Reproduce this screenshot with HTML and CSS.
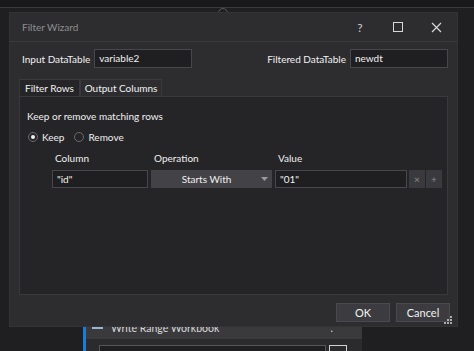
FILE: index.html
```html
<!DOCTYPE html>
<html lang="en">
<head>
  <meta charset="UTF-8">
  <title>Filter Wizard</title>
  <link rel="stylesheet" href="styles.css">
</head>
<body>

  <div class="topbar"></div>
  <div class="collapse-dot"></div>

  <!-- activity behind the dialog -->
  <div class="activity">
    <div class="activity-head">
      <span class="activity-icon"></span>
      <span class="activity-title">Write Range Workbook</span>
      <span class="activity-dot">.</span>
      <span class="activity-chev">&#8963;</span>
    </div>
    <div class="activity-body">
      <div class="activity-input"></div>
      <div class="activity-btn"></div>
    </div>
  </div>

  <div class="dialog">
    <div class="title-bar">
      <span class="title">Filter Wizard</span>
      <div class="title-icons">
        <span class="t-icon">?</span>
        <span class="t-icon"><span class="max-box"></span></span>
        <span class="t-icon">
          <svg width="11" height="11" viewBox="0 0 11 11"><path d="M1 1 L10 10 M10 1 L1 10" stroke="#d8d8d8" stroke-width="1.2"/></svg>
        </span>
      </div>
    </div>

    <div class="dialog-body">
      <div class="table-row">
        <div class="field">
          <label>Input DataTable</label>
          <div class="text-box">variable2</div>
        </div>
        <div class="field">
          <label>Filtered DataTable</label>
          <div class="text-box">newdt</div>
        </div>
      </div>

      <div class="tabs">
        <span class="tab active">Filter Rows</span>
        <span class="tab">Output Columns</span>
      </div>

      <div class="tab-panel">
        <div class="hint">Keep or remove matching rows</div>
        <div class="radios">
          <span class="radio checked"></span><span class="radio-label">Keep</span>
          <span class="radio"></span><span class="radio-label">Remove</span>
        </div>

        <div class="filter-grid">
          <span class="col-head">Column</span>
          <span class="col-head">Operation</span>
          <span class="col-head">Value</span>
          <span></span>

          <div class="text-box cell">"id"</div>
          <div class="select">
            <span>Starts With</span>
            <svg class="caret" width="7" height="4" viewBox="0 0 7 4"><path d="M0 0 H7 L3.5 4 Z" fill="#9a9a9e"/></svg>
          </div>
          <div class="text-box cell">"01"</div>
          <div class="row-btns">
            <span class="row-btn">&#215;</span>
            <span class="row-btn">+</span>
          </div>
        </div>
      </div>

      <div class="footer">
        <button class="btn">OK</button>
        <button class="btn">Cancel</button>
        <svg class="grip" width="8" height="8" viewBox="0 0 8 8">
          <rect x="6" y="0" width="2" height="2" fill="#aaa"/>
          <rect x="3" y="3" width="2" height="2" fill="#aaa"/>
          <rect x="6" y="3" width="2" height="2" fill="#aaa"/>
          <rect x="0" y="6" width="2" height="2" fill="#aaa"/>
          <rect x="3" y="6" width="2" height="2" fill="#aaa"/>
          <rect x="6" y="6" width="2" height="2" fill="#aaa"/>
        </svg>
      </div>
    </div>
  </div>

</body>
</html>
```

FILE: styles.css
```css
body {
  margin: 0;
  width: 474px;
  height: 351px;
  overflow: hidden;
  position: relative;
  background-color: #1f1f21;
  font-family: Lato, "Noto Sans", sans-serif;
  font-size: 10px;
  color: #f0f0f0;
}

.topbar {
  height: 7px;
  background-color: #19191b;
  border-bottom: 1px solid #3a3a3d;
}

.collapse-dot {
  position: absolute;
  left: 218px;
  top: 8px;
  width: 8px;
  height: 8px;
  border: 1px solid #5a5a5e;
  border-radius: 50%;
}

/* dialog */
.dialog {
  position: relative;
  z-index: 2;
  margin: 5px 0 0 10px;
  width: 447px;
  height: 313px;
  background-color: #2d2d30;
  box-shadow: 0 0 0 1px #333337;
  display: flex;
  flex-direction: column;
}

.title-bar {
  height: 28px;
  border-bottom: 1px solid #3a3a3d;
  display: flex;
  align-items: center;
  justify-content: space-between;
  padding-left: 12px;
}

.title {
  color: #8e8e92;
  font-size: 10px;
}

.title-icons {
  display: flex;
  align-items: center;
  padding-right: 2px;
}

.t-icon {
  width: 38px;
  display: flex;
  justify-content: center;
  color: #d0d0d0;
  font-size: 12px;
}

.max-box {
  width: 8px;
  height: 8px;
  border: 1px solid #d8d8d8;
}

.dialog-body {
  flex: 1;
  display: flex;
  flex-direction: column;
  padding: 7px 7px 4px 9px;
}

.table-row {
  display: flex;
  justify-content: space-between;
  padding-left: 3px;
  padding-right: 2px;
}

.field {
  display: flex;
  align-items: center;
  gap: 4px;
}

.field label {
  color: #f2f2f2;
}

.text-box {
  box-sizing: border-box;
  width: 98px;
  height: 19px;
  padding: 0 4px;
  line-height: 17px;
  background-color: #1f1f21;
  border: 1px solid #48484c;
  color: #f2f2f2;
}

/* tabs */
.tabs {
  margin-top: 11px;
  display: flex;
  height: 17px;
}

.tab {
  box-sizing: border-box;
  width: 82px;
  height: 17px;
  line-height: 16px;
  text-align: center;
  white-space: nowrap;
  border: 1px solid #3a3a3e;
  border-bottom: none;
  background-color: #2d2d30;
  color: #f2f2f2;
}

.tab.active {
  width: 61px;
  background-color: #252527;
}

.tab-panel {
  box-sizing: border-box;
  width: 429px;
  height: 199px;
  background-color: #252527;
  border: 1px solid #3a3a3e;
  padding: 12px 0 0 7px;
}

.hint {
  line-height: 14px;
}

.radios {
  margin-top: 7px;
  display: flex;
  align-items: center;
  height: 14px;
}

.radio {
  box-sizing: border-box;
  width: 10px;
  height: 10px;
  border: 1px solid #6a6a6e;
  border-radius: 50%;
  margin-left: 1px;
  margin-right: 4px;
  display: flex;
  align-items: center;
  justify-content: center;
}

.radio.checked::after {
  content: "";
  width: 4px;
  height: 4px;
  border-radius: 50%;
  background-color: #f0f0f0;
}

.radio-label {
  margin-right: 9px;
}

.filter-grid {
  margin-top: 7px;
  margin-left: 25px;
  display: grid;
  grid-template-columns: 96px 121px 132px 35px;
  column-gap: 3px;
  row-gap: 4px;
}

.col-head {
  padding-left: 3px;
  line-height: 15px;
}

.text-box.cell {
  width: auto;
  height: 18px;
  line-height: 16px;
}

.select {
  box-sizing: border-box;
  height: 18px;
  padding-right: 10px;
  background-color: #434347;
  display: flex;
  align-items: center;
  justify-content: center;
  position: relative;
}

.caret {
  position: absolute;
  right: 4px;
  top: 7px;
}

.row-btns {
  display: flex;
  gap: 1px;
  margin-left: -1px;
}

.row-btn {
  width: 16px;
  height: 18px;
  background-color: #3a3a3e;
  color: #8a8a8e;
  font-size: 10px;
  line-height: 18px;
  text-align: center;
}

/* footer */
.footer {
  margin-top: auto;
  display: flex;
  justify-content: flex-end;
  gap: 6px;
  position: relative;
}

.btn {
  width: 54px;
  height: 19px;
  padding: 0;
  background-color: #3c3c40;
  border: 1px solid #4a4a4e;
  color: #f2f2f2;
  font-family: Lato, "Noto Sans", sans-serif;
  font-size: 11px;
}

.grip {
  position: absolute;
  right: -2px;
  bottom: -2px;
}

/* workflow activity peeking out below */
.activity {
  position: absolute;
  z-index: 1;
  left: 83px;
  top: 316px;
  width: 276px;
  height: 40px;
  background-color: #2b2b2e;
  border-left: 3px solid #1a7fd4;
}

.activity-head {
  height: 23px;
  background-color: #3a3a3d;
  display: flex;
  align-items: center;
  padding-left: 6px;
  color: #d8d8d8;
  font-size: 10.5px;
}

.activity-icon {
  width: 11px;
  height: 3px;
  background-color: #9ab4d6;
  margin-right: 8px;
}

.activity-title {
  flex: 1;
}

.activity-dot {
  margin-right: 12px;
}

.activity-chev {
  margin-right: 8px;
  font-size: 11px;
}

.activity-body {
  display: flex;
  gap: 3px;
  padding: 6px 0 0 13px;
}

.activity-input {
  width: 225px;
  height: 14px;
  border: 1px solid #555558;
  background-color: #1f1f21;
}

.activity-btn {
  width: 16px;
  height: 14px;
  border: 1px solid #d0d0d0;
  background-color: #2b2b2e;
}
```
